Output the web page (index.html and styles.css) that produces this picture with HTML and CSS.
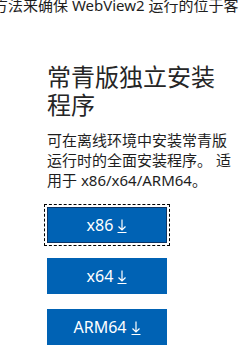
FILE: index.html
```html
<!DOCTYPE html>
<html>
	<head>
		<meta charset="UTF-8" />
		<title>WebView2 Runtime</title>
		<link rel="stylesheet" href="styles.css">
	</head>
	<body>
		<p class="intro">方法来确保 WebView2 运行的位于客</p>
		<section class="installer">
			<h2 class="installer-title">常青版独立安装程序</h2>
			<p class="installer-text">可在离线环境中安装常青版运行时的全面安装程序。 适用于 x86/x64/ARM64。</p>
			<div class="downloads">
				<a class="button focused" href="#">x86 <svg class="icon" viewBox="0 0 10 14"><path d="M5 0.5V11M1.5 7.5L5 11L8.5 7.5M0.5 13.5H9.5" /></svg></a>
				<a class="button" href="#">x64 <svg class="icon" viewBox="0 0 10 14"><path d="M5 0.5V11M1.5 7.5L5 11L8.5 7.5M0.5 13.5H9.5" /></svg></a>
				<a class="button" href="#">ARM64 <svg class="icon" viewBox="0 0 10 14"><path d="M5 0.5V11M1.5 7.5L5 11L8.5 7.5M0.5 13.5H9.5" /></svg></a>
			</div>
		</section>
	</body>
</html>
```

FILE: styles.css
```css
* {
	margin: 0;
	padding: 0;
	box-sizing: border-box;
}
body {
	font-family: "Noto Sans", "Noto Sans CJK SC", sans-serif;
	color: #1e1e1e;
	background-color: #fff;
	overflow: hidden;
}
.intro {
	white-space: nowrap;
	font-size: 15px;
	line-height: 20px;
	margin: -5px 0 0 -7px;
}
.installer {
	width: 235px;
	padding: 0 0 0 47px;
	margin-top: 48px;
}
.installer-title {
	font-size: 24px;
	font-weight: normal;
	line-height: 28px;
	color: #262626;
}
.installer-text {
	font-size: 15px;
	line-height: 20px;
	margin-top: 11px;
}
.downloads {
	display: flex;
	flex-direction: column;
	gap: 15px;
	margin-top: 17px;
}
.button {
	display: flex;
	align-items: center;
	justify-content: center;
	gap: 4px;
	width: 120px;
	height: 36px;
	background-color: #0062b4;
	color: #fff;
	font-size: 16px;
	text-decoration: none;
}
.button.focused {
	box-shadow: inset 0 0 0 1px #0c3566;
	outline: 1px dashed #000;
	outline-offset: 2px;
}
.icon {
	width: 10px;
	height: 14px;
	margin-top: 1px;
	fill: none;
	stroke: #fff;
	stroke-width: 1.2;
}
```
